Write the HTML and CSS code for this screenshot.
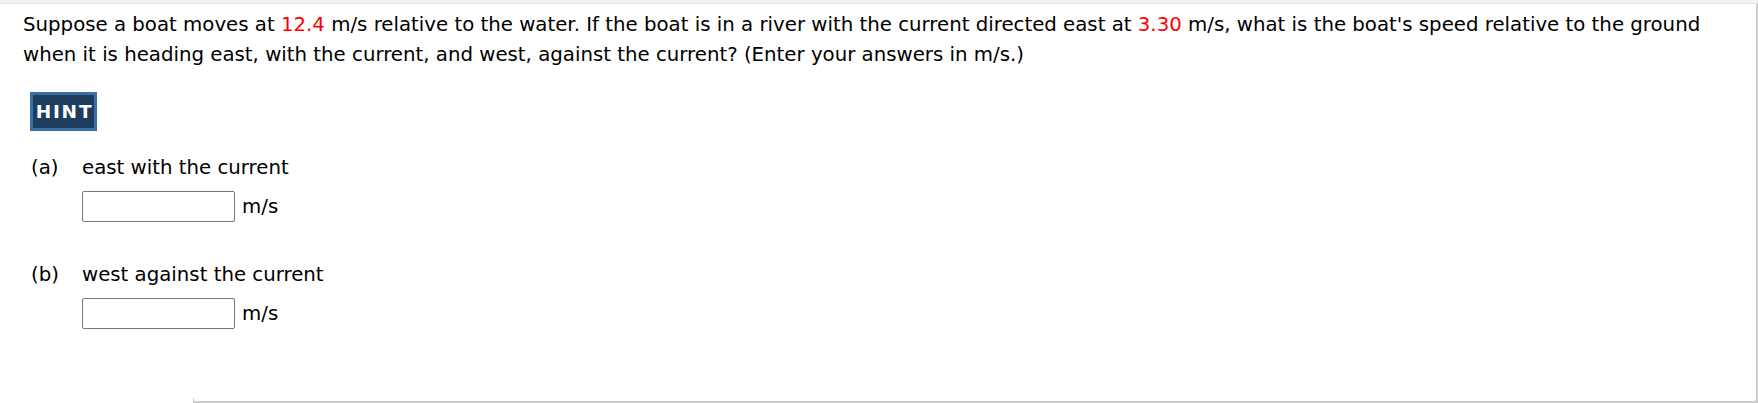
FILE: index.html
```html
<!DOCTYPE html>
<html lang="en">
<head>
<meta charset="utf-8">
<title>Boat relative velocity</title>
<link rel="stylesheet" href="styles.css">
</head>
<body>
<div class="topbar"></div>
<div class="panel">
  <div class="content">
    <p class="question">Suppose a boat moves at <span class="num">12.4</span> m/s relative to the water. If the boat is in a river with the current directed east at <span class="num">3.30</span> m/s, what is the boat's speed relative to the ground when it is heading east, with the current, and west, against the current? (Enter your answers in m/s.)</p>
    <div class="hint-wrap"><button class="hint" type="button">HINT</button></div>
    <div class="part part-a">
      <div class="label">(a)</div>
      <div class="body">
        <div class="prompt">east with the current</div>
        <div class="answer"><input class="field" type="text"><span class="unit">m/s</span></div>
      </div>
    </div>
    <div class="part part-b">
      <div class="label">(b)</div>
      <div class="body">
        <div class="prompt">west against the current</div>
        <div class="answer"><input class="field" type="text"><span class="unit">m/s</span></div>
      </div>
    </div>
  </div>
  <div class="footer-rule"></div>
</div>
</body>
</html>
```

FILE: styles.css
```css
html, body {
  margin: 0;
  padding: 0;
  background: #ffffff;
}
body {
  font-family: "DejaVu Sans", Verdana, sans-serif;
  font-size: 19.75px;
  color: #000000;
  width: 1758px;
  height: 403px;
  overflow: hidden;
}
.topbar {
  height: 3px;
  background: #f1f1f1;
  border-bottom: 1px solid #e4e4e4;
}
.panel {
  height: 399px;
  box-sizing: border-box;
  border-right: 2px solid #cccccc;
  display: flex;
  flex-direction: column;
}
.content {
  flex: 1;
  padding: 6px 0 0 23px;
}
.question {
  margin: 0;
  line-height: 30px;
  width: 1705px;
}
.num {
  color: #ff0000;
}
.hint-wrap {
  margin: 22px 0 0 7px;
}
.hint {
  font-family: "DejaVu Sans", Verdana, sans-serif;
  font-weight: bold;
  font-size: 18.5px;
  letter-spacing: 1.8px;
  color: #ffffff;
  background: #1d3e5e;
  border: 3px solid #3a6ea5;
  width: 67px;
  height: 39px;
  padding: 0 0 0 2px;
  margin: 0;
  line-height: 33px;
  box-sizing: border-box;
  text-align: center;
}
.part {
  display: grid;
  grid-template-columns: 51px auto;
  margin-left: 8px;
}
.part-a {
  margin-top: 22px;
}
.part-b {
  margin-top: 38px;
}
.label, .prompt {
  line-height: 30px;
}
.answer {
  display: flex;
  align-items: center;
  gap: 7px;
  margin-top: 8px;
}
.field {
  width: 153px;
  height: 31px;
  box-sizing: border-box;
  border: 1px solid #767676;
  border-radius: 2px;
  padding: 0 4px;
  margin: 0;
  font-family: "DejaVu Sans", Verdana, sans-serif;
  font-size: 18px;
  background: #ffffff;
}
.unit {
  line-height: 30px;
}
.footer-rule {
  margin-left: 193px;
  margin-right: -2px;
  height: 3px;
  border-left: 1px solid #cccccc;
  border-bottom: 2px solid #cccccc;
  border-bottom-right-radius: 4px;
  border-right: 2px solid #cccccc;
}
```
